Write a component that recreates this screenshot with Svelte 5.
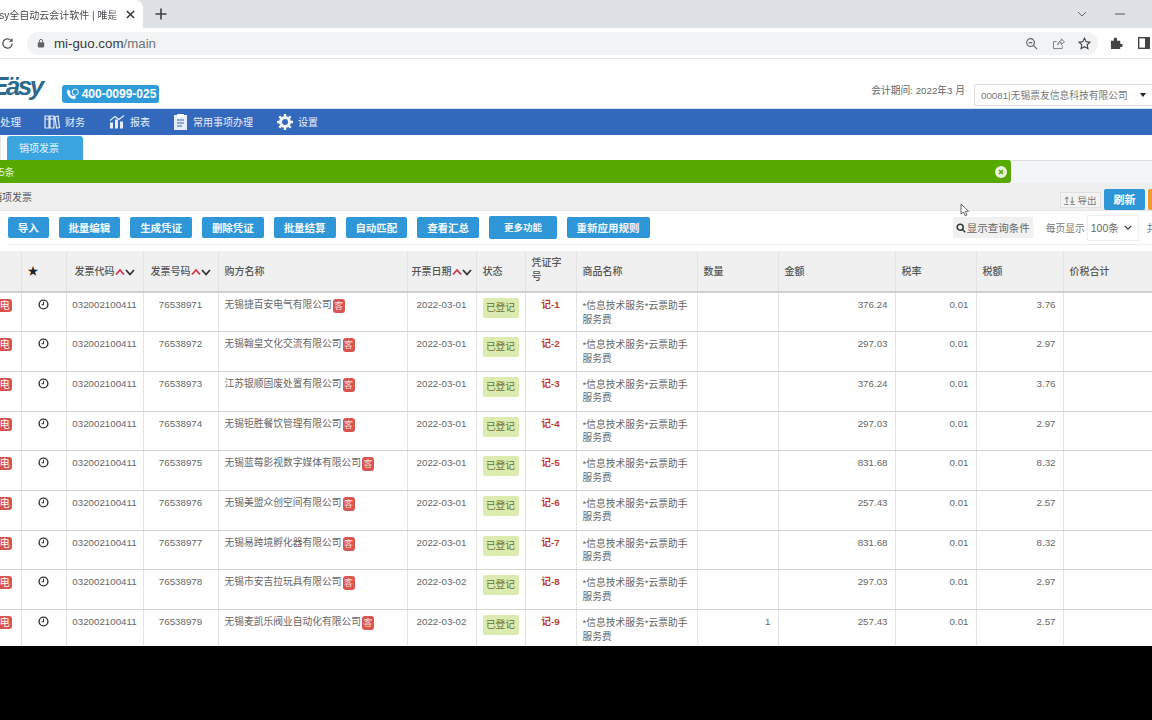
<script>
  const nav = [
    { label: '财务', icon: 'books' },
    { label: '报表', icon: 'chart' },
    { label: '常用事项办理', icon: 'form' },
    { label: '设置', icon: 'gear' }
  ];
  const actions = [
    { label: '导入', w: 40.5 },
    { label: '批量编辑', w: 61.75 },
    { label: '生成凭证', w: 61.75 },
    { label: '删除凭证', w: 61.75 },
    { label: '批量结算', w: 61.75 },
    { label: '自动匹配', w: 61.75 },
    { label: '查看汇总', w: 61.75 },
    { label: '更多功能', w: 68, more: true },
    { label: '重新应用规则', w: 83 }
  ];
  const rows = [
    ['76538971', '无锡捷百安电气有限公司', '2022-03-01', '376.24', '3.76', ''],
    ['76538972', '无锡翰皇文化交流有限公司', '2022-03-01', '297.03', '2.97', ''],
    ['76538973', '江苏银顺固废处置有限公司', '2022-03-01', '376.24', '3.76', ''],
    ['76538974', '无锡钜胜餐饮管理有限公司', '2022-03-01', '297.03', '2.97', ''],
    ['76538975', '无锡蓝莓影视数字媒体有限公司', '2022-03-01', '831.68', '8.32', ''],
    ['76538976', '无锡美盟众创空间有限公司', '2022-03-01', '257.43', '2.57', ''],
    ['76538977', '无锡易跨境孵化器有限公司', '2022-03-01', '831.68', '8.32', ''],
    ['76538978', '无锡市安吉拉玩具有限公司', '2022-03-02', '297.03', '2.97', ''],
    ['76538979', '无锡麦凯乐阀业自动化有限公司', '2022-03-02', '257.43', '2.57', '1']
  ];
  const cols = [40, 45, 77, 75, 189, 69, 49, 51, 121, 81, 117, 81, 87, 100];
</script>

{#snippet sorter()}
  <svg class="sorter" viewBox="0 0 20 8" width="20" height="8" aria-hidden="true">
    <path d="M1 6.5 5 2l4 4.500" fill="none" stroke="#d0364c" stroke-width="1.800" />
    <path d="M11 2l4 4.500L19 2" fill="none" stroke="#333" stroke-width="1.800" />
  </svg>
{/snippet}

<div class="screen">
  <div class="chrome-tabs">
    <div class="tab">
      <span class="tab-title">Easy全自动云会计软件 | 唯是</span>
      <svg class="tab-x" viewBox="0 0 10 10" width="9" height="9"><path d="M1 1l8 8M9 1l-8 8" stroke="#333" stroke-width="1.600" /></svg>
    </div>
    <svg class="plus" viewBox="0 0 12 12" width="12" height="12"><path d="M6 .5v11M.5 6h11" stroke="#3c4043" stroke-width="1.600" /></svg>
    <div class="grow"></div>
    <svg class="win chev" viewBox="0 0 10 6" width="10" height="6"><path d="M1 1l4 4 4-4" fill="none" stroke="#666" stroke-width="1" /></svg>
    <svg class="win" viewBox="0 0 10 2" width="10" height="2"><path d="M0 1h10" stroke="#555" stroke-width="1" /></svg>
  </div>

  <div class="chrome-bar">
    <svg class="reload" viewBox="0 0 14 14" width="13" height="13"><path d="M12 7a5 5 0 1 1-1.500-3.600" fill="none" stroke="#555" stroke-width="1.400" /><path d="M12.500 1v4h-4z" fill="#555" /></svg>
    <div class="omni">
      <svg viewBox="0 0 10 12" width="8" height="10"><rect x="1" y="5" width="8" height="6.500" rx="1" fill="#5f6368" /><path d="M3 5V3.500a2 2 0 0 1 4 0V5" fill="none" stroke="#5f6368" stroke-width="1.200" /></svg>
      <span class="url"><b>mi-guo.com</b>/main</span>
      <div class="grow"></div>
      <svg viewBox="0 0 14 14" width="13" height="13"><circle cx="6" cy="6" r="4.200" fill="none" stroke="#666" stroke-width="1.200" /><path d="M9 9l4 4M4 6h4" stroke="#666" stroke-width="1.200" /></svg>
      <svg viewBox="0 0 14 14" width="13" height="13"><path d="M11 9v3.500H1.500V5H5M6 8.500C6.500 5.500 8.500 4 10 4V2l3.500 3.200L10 8V6C8 6 7 7 6 8.500z" fill="none" stroke="#777" stroke-width="1" /></svg>
      <svg viewBox="0 0 14 14" width="13" height="13"><path d="M7 1.200l1.800 3.800 4.100.5-3 2.900.8 4.100L7 10.500 3.300 12.500l.8-4.100-3-2.900 4.100-.5z" fill="none" stroke="#444" stroke-width="1.200" /></svg>
    </div>
    <svg class="ext" viewBox="0 0 14 15" width="13" height="14"><path d="M1 5h3V3.500a1.800 1.800 0 0 1 3.600 0V5H11v3.200h1a1.800 1.800 0 0 1 0 3.600h-1V14H1z" fill="#444" /></svg>
    <svg class="side" viewBox="0 0 12 12" width="12" height="12"><rect x=".7" y=".7" width="10.600" height="10.600" fill="none" stroke="#444" stroke-width="1.400" /><rect x="7" y="1" width="4" height="10" fill="#444" /></svg>
  </div>

  <header class="brand">
    <span class="logo">Eäsy</span>
    <span class="phone">
      <svg viewBox="0 0 16 14" width="15" height="13"><path d="M2 3c0 5 4 9 8 9l2-2-2.500-2-1.300 1C7 8.500 5.500 7 5 5.500l1-1.300L4 1.500z" fill="#fff" /><circle cx="11" cy="4.500" r="3.300" fill="none" stroke="#fff" stroke-width="1" /></svg>
      400-0099-025
    </span>
    <div class="grow"></div>
    <span class="period">会计期间: 2022年3 月</span>
    <div class="company">
      <span>00081|无锡票友信息科技有限公司</span>
      <i class="caret"></i>
    </div>
  </header>

  <nav class="nav">
    <span class="nav-item first">处理</span>
    {#each nav as n}
      <span class="nav-item">
        {#if n.icon === 'books'}
          <svg viewBox="0 0 16 14" width="16" height="14"><path d="M1 1h4v12H1zM6 1h4v12H6zM11 2l3-1 1.500 11.500-3 .5z" fill="none" stroke="#dfe8f5" stroke-width="1.200" /><path d="M1 4h4M6 4h4" stroke="#dfe8f5" /></svg>
        {:else if n.icon === 'chart'}
          <svg viewBox="0 0 16 14" width="16" height="15"><path d="M1 14V8h3v6zM6 14V5h3v9zM11 14V7h3v7z" fill="#e6edf7" /><path d="M1 6l5-4 4 3 5-4" fill="none" stroke="#e6edf7" stroke-width="1.200" /></svg>
        {:else if n.icon === 'form'}
          <svg viewBox="0 0 14 16" width="14" height="16"><path d="M0 1h13v15H0z" fill="#e6edf7" /><path d="M3 0h7v3H3z" fill="#fff" /><path d="M3 6h7M3 9h7M3 12h5" stroke="#3369bd" /></svg>
        {:else}
          <svg viewBox="0 0 16 16" width="16" height="16"><circle cx="8" cy="8" r="4.500" fill="none" stroke="#f2f5fa" stroke-width="3" /><path d="M8 0v3M8 13v3M0 8h3M13 8h3M2.300 2.300l2.200 2.200M11.500 11.500l2.200 2.200M13.700 2.300l-2.200 2.200M4.500 11.500l-2.200 2.200" stroke="#f2f5fa" stroke-width="2.400" /></svg>
        {/if}
        {n.label}
      </span>
    {/each}
  </nav>

  <div class="page-tabs">
    <span class="edge"></span>
    <span class="page-tab">销项发票</span>
  </div>

  <div class="alert-row">
    <div class="alert">
      <span class="alert-text">5条</span>
      <span class="alert-x">
        <svg viewBox="0 0 12 12" width="12" height="12"><circle cx="6" cy="6" r="6" fill="#e8f2dc" /><path d="M4 4l4 4M8 4l-4 4" stroke="#57a900" stroke-width="1.500" /></svg>
      </span>
    </div>
  </div>

  <div class="crumbs">
    <span class="crumb-text">销项发票</span>
    <div class="grow"></div>
    <span class="export">
      <svg viewBox="0 0 12 10" width="11" height="9"><path d="M3 1v7M1 3.500 3 1l2 2.500M9 1v7M7 5.500 9 8l2-2.500M0 9.500h5M7 9.500h5" fill="none" stroke="#777" stroke-width="1" /></svg>
      导出
    </span>
    <span class="refresh">刷新</span>
    <span class="orange"></span>
  </div>

  <div class="actions">
    {#each actions as a}
      <button class="btn" class:more={a.more} style="width:{a.w}px">{a.label}</button>
    {/each}
    <div class="grow"></div>
    <span class="query">
      <svg viewBox="0 0 12 12" width="10" height="10"><circle cx="5" cy="5" r="3.600" fill="none" stroke="#333" stroke-width="1.800" /><path d="M8 8l3 3" stroke="#333" stroke-width="1.800" /></svg>
      显示查询条件
    </span>
    <span class="perpage">每页显示</span>
    <div class="size"><span>100条</span>
      <svg viewBox="0 0 10 6" width="8" height="5"><path d="M1 1l4 4 4-4" fill="none" stroke="#333" stroke-width="1.600" /></svg>
    </div>
    <span class="total">共</span>
  </div>

  <div class="table-wrap">
    <table>
      <colgroup>
        {#each cols as c}<col style="width:{c}px" />{/each}
      </colgroup>
      <thead>
        <tr>
          <th></th>
          <th class="star">★</th>
          <th class="center">发票代码{@render sorter()}</th>
          <th class="center">发票号码{@render sorter()}</th>
          <th>购方名称</th>
          <th class="center">开票日期{@render sorter()}</th>
          <th>状态</th>
          <th class="wrap">凭证字号</th>
          <th>商品名称</th>
          <th>数量</th>
          <th>金额</th>
          <th>税率</th>
          <th>税额</th>
          <th>价税合计</th>
        </tr>
      </thead>
      <tbody>
        {#each rows as r, i}
          <tr>
            <td class="center"><span class="dian">电</span></td>
            <td class="center">
              <svg class="clock" viewBox="0 0 12 12" width="11" height="11"><circle cx="6" cy="6" r="4.800" fill="none" stroke="#333" stroke-width="1.500" /><path d="M6 3v3.200H3.800" fill="none" stroke="#333" stroke-width="1.100" /></svg>
            </td>
            <td class="center">032002100411</td>
            <td class="center">{r[0]}</td>
            <td>{r[1]}<span class="ke">客</span></td>
            <td class="center">{r[2]}</td>
            <td><span class="status">已登记</span></td>
            <td class="center voucher">记-{i + 1}</td>
            <td class="goods">*信息技术服务*云票助手服务费</td>
            <td class="right">{r[5]}</td>
            <td class="right">{r[3]}</td>
            <td class="right">0.01</td>
            <td class="right">{r[4]}</td>
            <td></td>
          </tr>
        {/each}
      </tbody>
    </table>
  </div>

  <svg class="cursor" viewBox="0 0 10 14" width="10" height="14"><path d="M1 1v10l2.500-2 1.700 3.800 1.800-.8L5.300 8.300H8.500z" fill="#fff" stroke="#444" stroke-width=".8" /></svg>
</div>

<style>
  :global(body) {
    margin: 0;
    background: #000;
    overflow: hidden;
  }
  .screen {
    position: relative;
    width: 1152px;
    height: 646px;
    overflow: hidden;
    background: #fff;
    display: flex;
    flex-direction: column;
    font-family: "Liberation Sans", "Noto Sans CJK SC", sans-serif;
    font-size: 9.750px;
    color: #666;
  }
  .grow { flex: 1; }

  .chrome-tabs {
    height: 28px;
    flex: none;
    background: #dee1e6;
    display: flex;
    align-items: center;
    color: #45484c;
  }
  .tab {
    width: 143px;
    height: 28px;
    background: #fff;
    border-radius: 0 8px 0 0;
    display: flex;
    align-items: center;
    overflow: hidden;
    position: relative;
  }
  .tab-title {
    margin-left: -13px;
    font-size: 10px;
    white-space: nowrap;
    flex: none;
    width: 134px;
    overflow: hidden;
    -webkit-mask-image: linear-gradient(to right, #000 92%, transparent);
    mask-image: linear-gradient(to right, #000 92%, transparent);
  }
  .tab-x { margin-left: 5px; flex: none; }
  .plus { margin-left: 12px; }
  .win { margin-right: 27px; }
  .chev { margin-right: 28px; }

  .chrome-bar {
    flex: none;
    display: flex;
    align-items: center;
    border-bottom: 1px solid #e8e8e8;
    box-sizing: border-box;
    height: 31px;
  }
  .reload { margin-left: 1px; flex: none; }
  .omni {
    margin-left: 13px;
    width: 1071px;
    height: 23px;
    border-radius: 12px;
    background: #f1f3f4;
    display: flex;
    align-items: center;
    padding: 0 7px 0 10px;
    box-sizing: border-box;
  }
  .omni svg:nth-of-type(n + 2) { margin-left: 13.500px; }
  .url {
    margin-left: 9px;
    font-size: 13.300px;
    color: #70757a;
  }
  .url b { font-weight: 400; color: #3a3d40; }
  .ext { margin-left: 12px; flex: none; }
  .side { margin-left: 15px; flex: none; }

  .brand {
    flex: none;
    display: flex;
    align-items: flex-start;
    border-bottom: 1px solid #d7e1f0;
    box-sizing: border-box;
    height: 50px;
    overflow: hidden;
  }
  .logo {
    margin: 9px 0 0 -9px;
    width: 71px;
    flex: none;
    font: italic 700 26px/36px "Liberation Sans", sans-serif;
    letter-spacing: -2.500px;
    color: #2b6a8e;
  }
  .phone {
    margin-top: 26px;
    width: 97px;
    height: 18px;
    flex: none;
    border-radius: 3px;
    background: #2f9bd8;
    color: #fff;
    font-weight: 700;
    font-size: 12px;
    display: flex;
    align-items: center;
    justify-content: center;
    gap: 2px;
    white-space: nowrap;
  }
  .period {
    margin-top: 24px;
    color: #666;
    margin-right: 9px;
  }
  .company {
    margin-top: 25px;
    width: 178px;
    height: 22px;
    flex: none;
    box-sizing: border-box;
    border: 1px solid #ddd;
    border-right: 0;
    border-radius: 3px 0 0 3px;
    padding: 0 6px;
    display: flex;
    align-items: center;
    justify-content: space-between;
    color: #777;
    white-space: nowrap;
  }
  .caret {
    border: 3.500px solid transparent;
    border-top: 4px solid #222;
    border-bottom: 0;
  }

  .nav {
    height: 26px;
    flex: none;
    box-sizing: border-box;
    padding-bottom: 1px;
    background: #3369bd;
    display: flex;
    align-items: center;
    color: #e8eff9;
    font-size: 10px;
  }
  .nav-item { display: flex; align-items: center; gap: 5px; margin-right: 24px; white-space: nowrap; }
  .nav-item.first { margin-right: 23px; font-size: 10.500px; }

  .page-tabs {
    height: 25px;
    flex: none;
    display: flex;
    align-items: flex-end;
  }
  .edge { width: 1px; height: 24px; background: #e5e5e5; }
  .page-tab {
    margin-left: 6px;
    width: 76px;
    height: 24px;
    box-sizing: border-box;
    padding: 0 0 1px 12px;
    border-radius: 3px 3px 0 0;
    background: #3aa5e0;
    color: #e9f5fc;
    font-size: 10px;
    display: flex;
    align-items: center;
  }

  .alert-row {
    height: 23px;
    flex: none;
    background: #f3f5f8;
    border-top: 1px solid #ddd;
    box-sizing: border-box;
    display: flex;
  }
  .alert {
    width: 1011px;
    margin-top: -1px;
    height: 23px;
    background: #57a900;
    border-radius: 0 3px 3px 0;
    display: flex;
    align-items: center;
    justify-content: space-between;
    padding-right: 4px;
    box-sizing: border-box;
    color: #e7f4d8;
    font-size: 10px;
  }
  .alert-text { margin-left: -1px; }
  .alert-x { display: flex; }

  .crumbs {
    height: 28px;
    flex: none;
    box-sizing: border-box;
    background: #efefef;
    border-bottom: 1px solid #e4e4e4;
    display: flex;
    align-items: center;
    white-space: nowrap;
    overflow: hidden;
    padding-top: 3px;
  }
  .crumb-text { margin-left: -8px; margin-top: -4px; color: #555; font-size: 10px; }
  .export {
    width: 41px;
    height: 16px;
    box-sizing: border-box;
    background: #f3f3f3;
    border: 1px solid #e0e0e0;
    display: flex;
    align-items: center;
    justify-content: center;
    gap: 2px;
    color: #777;
    font-size: 9.500px;
    margin-top: 4px;
    flex: none;
  }
  .refresh {
    margin-left: 3px;
    width: 41px;
    height: 21px;
    border-radius: 2px;
    background: #2f96d8;
    color: #fff;
    font-weight: 700;
    font-size: 11px;
    display: flex;
    align-items: center;
    justify-content: center;
    flex: none;
    margin-top: 2px;
  }
  .orange {
    margin-left: 3px;
    width: 4px;
    height: 21px;
    background: #ee9a36;
    border-radius: 2px 0 0 2px;
    flex: none;
    margin-top: 2px;
  }

  .actions {
    height: 34px;
    flex: none;
    box-sizing: border-box;
    display: flex;
    align-items: center;
    gap: 10px;
    border-bottom: 1px solid #efefef;
    margin-left: 8px;
    white-space: nowrap;
  }
  .btn {
    height: 21px;
    padding: 0 0 1px;
    border: 0;
    border-radius: 2px;
    background: #2f96d8;
    color: #f2f9fd;
    font-family: inherit;
    font-size: 10.500px;
    font-weight: 700;
    flex: none;
  }
  .btn.more { height: 23px; font-size: 9.500px; margin-right: -0.500px; }
  .query {
    width: 80px;
    height: 21px;
    background: #f0f0f0;
    color: #666;
    font-size: 10.500px;
    display: flex;
    align-items: center;
    justify-content: center;
    gap: 1px;
    margin-right: 3px;
    flex: none;
  }
  .perpage { margin-right: -8px; color: #777; flex: none; }
  .size {
    width: 52px;
    height: 26px;
    box-sizing: border-box;
    background: #fff;
    border: 1px solid #eee;
    padding: 0 6px 0 3px;
    display: flex;
    align-items: center;
    justify-content: space-between;
    color: #666;
    font-size: 10.500px;
    flex: none;
  }
  .total { margin-left: -2px; margin-right: -4.500px; color: #777; flex: none; }

  .table-wrap {
    flex: 1;
    overflow: hidden;
    margin-top: 6px;
    min-height: 0;
  }
  table {
    table-layout: fixed;
    border-collapse: collapse;
    width: 1142px;
    margin-left: -19px;
  }
  th, td {
    border-right: 1px solid #e3e3e3;
    box-sizing: border-box;
    padding: 0 6px;
    text-align: left;
    overflow: hidden;
  }
  th {
    height: 41px;
    padding-bottom: 2px;
    background: #f0f0f0;
    border-bottom: 2px solid #d0d0d0;
    font-size: 10px;
    color: #555;
    font-weight: 500;
    white-space: nowrap;
  }
  th.center { padding-left: 0; padding-right: 0; }
  th.wrap { white-space: normal; line-height: 14px; }
  th.star { color: #222; font-size: 11px; }
  td {
    height: 39.700px;
    vertical-align: top;
    padding-top: 5px;
    line-height: 14px;
    border-bottom: 1.500px solid #d3d3d3;
    white-space: nowrap;
  }
  .center { text-align: center; }
  td.center { padding-left: 0; padding-right: 0; }
  td.right { text-align: right; padding-right: 7px; }
  .sorter { vertical-align: -1px; margin-left: 0; }
  .clock { display: block; margin: 1px auto 0; }
  .dian {
    display: inline-block;
    position: relative;
    left: 4px;
    width: 14px;
    height: 13px;
    margin-top: 1px;
    line-height: 13px;
    border-radius: 3px;
    background: #d9534f;
    color: #fff;
    font-size: 10px;
    text-align: center;
  }
  .ke {
    display: inline-block;
    margin: 1px 0 0 1px;
    width: 12px;
    height: 14px;
    line-height: 14px;
    border-radius: 3px;
    background: #d9534f;
    color: #f8dcdc;
    font-size: 9px;
    text-align: center;
    vertical-align: top;
  }
  .status {
    display: inline-block;
    padding: 3px;
    width: 30px;
    text-align: center;
    white-space: nowrap;
    background: #dcebb0;
    color: #667033;
    border-radius: 2px;
  }
  .voucher { color: #c0392b; font-weight: 700; }
  .goods { white-space: normal; padding-top: 6px; line-height: 13.500px; }
  .cursor { position: absolute; left: 960px; top: 203px; }
</style>
